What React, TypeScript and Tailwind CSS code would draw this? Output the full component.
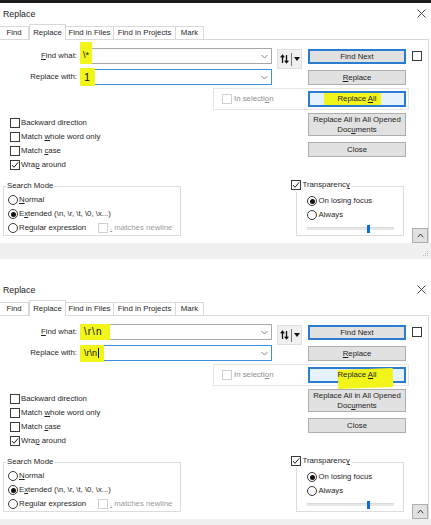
import React from "react";

const Check: React.FC<{ checked?: boolean; disabled?: boolean }> = ({ checked = false, disabled = false }) => (
  <span
    className={`w-[10px] h-[10px] shrink-0 border bg-white flex items-center justify-center ${
      disabled ? "border-[#cfcfcf]" : "border-[#3a3a3a]"
    }`}
  >
    {checked && (
      <svg width="8" height="8" viewBox="0 0 8 8">
        <path d="M1 4 L3 6.3 L7.2 1.3" fill="none" stroke="#222" strokeWidth="1" />
      </svg>
    )}
  </span>
);

const Radio: React.FC<{ on?: boolean }> = ({ on = false }) => (
  <span className="w-[10px] h-[10px] shrink-0 rounded-full border border-[#3a3a3a] bg-white flex items-center justify-center">
    {on && <span className="w-[5px] h-[5px] rounded-full bg-[#111]" />}
  </span>
);

const Btn: React.FC<{ className: string; children: React.ReactNode }> = ({ className, children }) => (
  <div
    className={`relative w-[98px] flex items-center justify-center text-center leading-[10px] text-[#1e1e1e] ${className}`}
  >
    {children}
  </div>
);

const Tab: React.FC<{ w: string; active?: boolean; children: React.ReactNode }> = ({ w, active, children }) => (
  <div
    className={`${w} flex items-center justify-center border-l border-t border-r border-[#d9d9d9] bg-white ${
      active ? "h-[16px] relative z-10 -mb-px" : "h-[13px] -ml-px"
    }`}
  >
    {children}
  </div>
);

type Props = {
  dark: boolean;
  find: React.ReactNode;
  repl: React.ReactNode;
  mark: React.ReactNode;
};

function Dialog({ dark, find, repl, mark }: Props) {
  return (
    <div className="flex flex-col shrink-0">
      <div className={dark ? "h-[3px] bg-[#1c1c1c]" : "h-[3px] bg-white"} />

      {/* title */}
      <div className="h-[20px] flex items-center justify-between pl-[3px] pr-[5px] pt-[1px]">
        <span className="text-[8.8px] text-[#222]">Replace</span>
        <svg width="9" height="9" viewBox="0 0 9 9">
          <path d="M0.5 0.5 L8.5 8.5 M8.5 0.5 L0.5 8.5" stroke="#333" strokeWidth="0.9" />
        </svg>
      </div>

      {/* tabs */}
      <div className="h-[16px] flex items-end">
        <Tab w="w-[30px]">Find</Tab>
        <Tab w="w-[37px]" active>
          Replace
        </Tab>
        <Tab w="w-[49px]">Find in Files</Tab>
        <Tab w="w-[63px]">Find in Projects</Tab>
        <Tab w="w-[29px]">Mark</Tab>
      </div>

      {/* tab page */}
      <div className="h-[204px] w-[429px] border-t border-r border-[#d9d9d9] flex flex-col">
        <div className="h-[132px] flex shrink-0">
          {/* left column */}
          <div className="w-[308px] shrink-0 flex flex-col">
            <div className="flex items-start">
              <div className="mt-[8px] flex flex-col gap-[5px]">
                <div className="flex items-center h-[16px]">
                  <span className="w-[77px] text-right">
                    <u className="decoration-[0.5px] underline-offset-1">F</u>ind what:
                  </span>
                  <div className="ml-[3px] w-[192px] h-[16px] border border-[#a8a8a8] flex items-center relative">
                    {find}
                    <svg className="absolute right-[3px]" width="7" height="5" viewBox="0 0 7 5">
                      <path d="M0.5 1 L3.5 4 L6.5 1" fill="none" stroke="#666" strokeWidth="0.8" />
                    </svg>
                  </div>
                </div>
                <div className="flex items-center h-[16px]">
                  <span className="w-[77px] text-right">Replace with:</span>
                  <div className="ml-[3px] w-[192px] h-[16px] border border-[#3d8ee0] flex items-center relative">
                    {repl}
                    <svg className="absolute right-[3px]" width="7" height="5" viewBox="0 0 7 5">
                      <path d="M0.5 1 L3.5 4 L6.5 1" fill="none" stroke="#666" strokeWidth="0.8" />
                    </svg>
                  </div>
                </div>
              </div>
              {/* swap button */}
              <div className="ml-[5px] mt-[9px] w-[25px] h-[20px] bg-[#f0f0f0] border border-[#e0e0e0] flex items-center justify-center gap-[2px]">
                <svg width="9" height="10" viewBox="0 0 9 10">
                  <path d="M2.5 9 V1.5 M0.7 3.3 L2.5 1.2 L4.3 3.3 M6.5 1 V8.5 M4.7 6.7 L6.5 8.8 L8.3 6.7" fill="none" stroke="#111" strokeWidth="1.3" />
                </svg>
                <span className="w-px h-[13px] bg-[#777]" />
                <svg width="6" height="4" viewBox="0 0 6 4">
                  <path d="M0 0 H6 L3 4 Z" fill="#111" />
                </svg>
              </div>
            </div>

            {/* in selection */}
            <div className="mt-[3px] ml-[213px] w-[196px] h-[22px] shrink-0 border border-[#e6e6e6] flex items-center pl-[8px] gap-[2px] text-[#8d8d8d]">
              <Check disabled />
              <span>
                In selecti<u className="decoration-[0.5px] underline-offset-1">o</u>n
              </span>
            </div>

            {/* options */}
            <div className="mt-[6px] ml-[10px] flex flex-col">
              <div className="h-[14px] flex items-center gap-[1px]">
                <Check />
                <span>Backward direction</span>
              </div>
              <div className="h-[14px] flex items-center gap-[1px]">
                <Check />
                <span>
                  Match <u className="decoration-[0.5px] underline-offset-1">w</u>hole word only
                </span>
              </div>
              <div className="h-[14px] flex items-center gap-[1px]">
                <Check />
                <span>
                  Match <u className="decoration-[0.5px] underline-offset-1">c</u>ase
                </span>
              </div>
              <div className="h-[14px] flex items-center gap-[1px]">
                <Check checked />
                <span>
                  Wra<u className="decoration-[0.5px] underline-offset-1">p</u> around
                </span>
              </div>
            </div>
          </div>

          {/* right column */}
          <div className="mt-[9px] flex flex-col gap-[6px]">
            <div className="flex items-start gap-[6px]">
              <Btn className="h-[15px] bg-[#e1e1e1] border-2 border-[#2b7bd0]">Find Next</Btn>
              <div className="mt-[2px]">
                <Check />
              </div>
            </div>
            <Btn className="h-[15px] bg-[#e1e1e1] border border-[#adadad]">
              <span>
                <u className="decoration-[0.5px] underline-offset-1">R</u>eplace
              </span>
            </Btn>
            <Btn className="h-[16px] bg-[#e5f1fb] border-2 border-[#2b7bd0]">
              {mark}
              <span className="relative">
                Replace <u className="decoration-[0.5px] underline-offset-1">A</u>ll
              </span>
            </Btn>
            <Btn className="h-[23px] bg-[#e1e1e1] border border-[#adadad]">
              <span>
                Replace All in All Opened
                <br />
                Doc<u className="decoration-[0.5px] underline-offset-1">u</u>ments
              </span>
            </Btn>
            <Btn className="h-[15px] bg-[#e1e1e1] border border-[#adadad]">Close</Btn>
          </div>
        </div>

        {/* bottom row */}
        <div className="flex items-start flex-1">
          <fieldset className="ml-[3px] mt-[9px] w-[179px] h-[55px] border border-[#dcdcdc]">
            <legend className="ml-[2px] px-[1px] leading-[10px]">Search Mode</legend>
            <div className="pl-[4px] pt-[2px] flex flex-col">
              <div className="h-[14px] flex items-center gap-[1px]">
                <Radio />
                <span>
                  <u className="decoration-[0.5px] underline-offset-1">N</u>ormal
                </span>
              </div>
              <div className="h-[14px] flex items-center gap-[1px]">
                <Radio on />
                <span>
                  E<u className="decoration-[0.5px] underline-offset-1">x</u>tended (\n, \r, \t, \0, \x...)
                </span>
              </div>
              <div className="h-[14px] flex items-center gap-[1px]">
                <Radio />
                <span className="w-[78px]">
                  Re<u className="decoration-[0.5px] underline-offset-1">g</u>ular expression
                </span>
                <Check disabled />
                <span className="ml-[1px] text-[#9a9a9a]">
                  <u className="decoration-[0.5px] underline-offset-1">.</u> matches newline
                </span>
              </div>
            </div>
          </fieldset>

          <fieldset className="ml-[115px] mt-[8px] w-[108px] h-[56px] border border-[#dcdcdc]">
            <legend className="-ml-[6px] pr-[2px] leading-[10px] bg-white">
              <span className="inline-flex items-center gap-[1px]">
                <Check checked />
                <span>
                  Transparenc<u className="decoration-[0.5px] underline-offset-1">y</u>
                </span>
              </span>
            </legend>
            <div className="pl-[10px] pt-[2px] flex flex-col">
              <div className="h-[14px] flex items-center gap-[1px]">
                <Radio on />
                <span>On losing focus</span>
              </div>
              <div className="h-[14px] flex items-center gap-[1px]">
                <Radio />
                <span>Always</span>
              </div>
              <div className="mt-[5px] w-[87px] h-[3px] bg-[#e7e7e7] border-t border-[#dadada] relative">
                <span className="absolute left-[60px] -top-[3px] w-[3px] h-[8px] bg-[#0a6fd6]" />
              </div>
            </div>
          </fieldset>

          <div className="ml-[8px] mt-[56px] w-[16px] h-[15px] bg-[#e1e1e1] border border-[#adadad] flex items-center justify-center">
            <svg width="7" height="5" viewBox="0 0 7 5">
              <path d="M0.8 4.2 L3.5 1 L6.2 4.2" fill="none" stroke="#222" strokeWidth="0.9" />
            </svg>
          </div>
        </div>
      </div>

      {/* status strip */}
      <div className="h-[16px] bg-[#f0f0f0] flex justify-end items-end pr-[2px] pb-[2px]">
        <svg width="6" height="6" viewBox="0 0 6 6">
          <rect x="4" y="0" width="1" height="1" fill="#bbb" />
          <rect x="2" y="2" width="1" height="1" fill="#bbb" />
          <rect x="4" y="2" width="1" height="1" fill="#bbb" />
          <rect x="0" y="4" width="1" height="1" fill="#bbb" />
          <rect x="2" y="4" width="1" height="1" fill="#bbb" />
          <rect x="4" y="4" width="1" height="1" fill="#bbb" />
        </svg>
      </div>
    </div>
  );
}

export default function App() {
  return (
    <div className="w-[431px] h-[525px] overflow-hidden bg-white text-[7.8px] leading-[10px] text-[#1f1f1f] font-['Liberation_Sans',Arial,sans-serif]">
      <Dialog
        dark
        find={
          <span className="relative h-[22px] -mt-[6px] ml-[-1px] w-[12px] bg-[#f2f51a] flex items-end pb-[4px] pl-[3px] text-[9px] text-[#111]">
            \*
          </span>
        }
        repl={
          <span className="h-[18px] w-[15px] ml-[-1px] bg-[#f2f51a] flex items-center pl-[4px] text-[11px] text-[#111]">
            1
          </span>
        }
        mark={<span className="absolute left-[14px] top-0 w-[57px] h-full bg-[#f2f51a]" />}
      />
      <div className="h-[17px]" />
      <Dialog
        dark={false}
        find={
          <span className="h-[16px] w-[30px] ml-[-1px] bg-[#f2f51a] flex items-center pl-[4px] text-[10px] tracking-[1px] text-[#111]">
            \r\n
          </span>
        }
        repl={
          <span className="h-[17px] w-[24px] ml-[-1px] bg-[#f2f51a] flex items-center pl-[4px] text-[9px] text-[#111]">
            \r\n<span className="ml-px w-px h-[10px] bg-[#111]" />
          </span>
        }
        mark={<span className="absolute left-[28px] top-0 w-[55px] h-[19px] bg-[#f2f51a] -rotate-2" />}
      />
    </div>
  );
}
